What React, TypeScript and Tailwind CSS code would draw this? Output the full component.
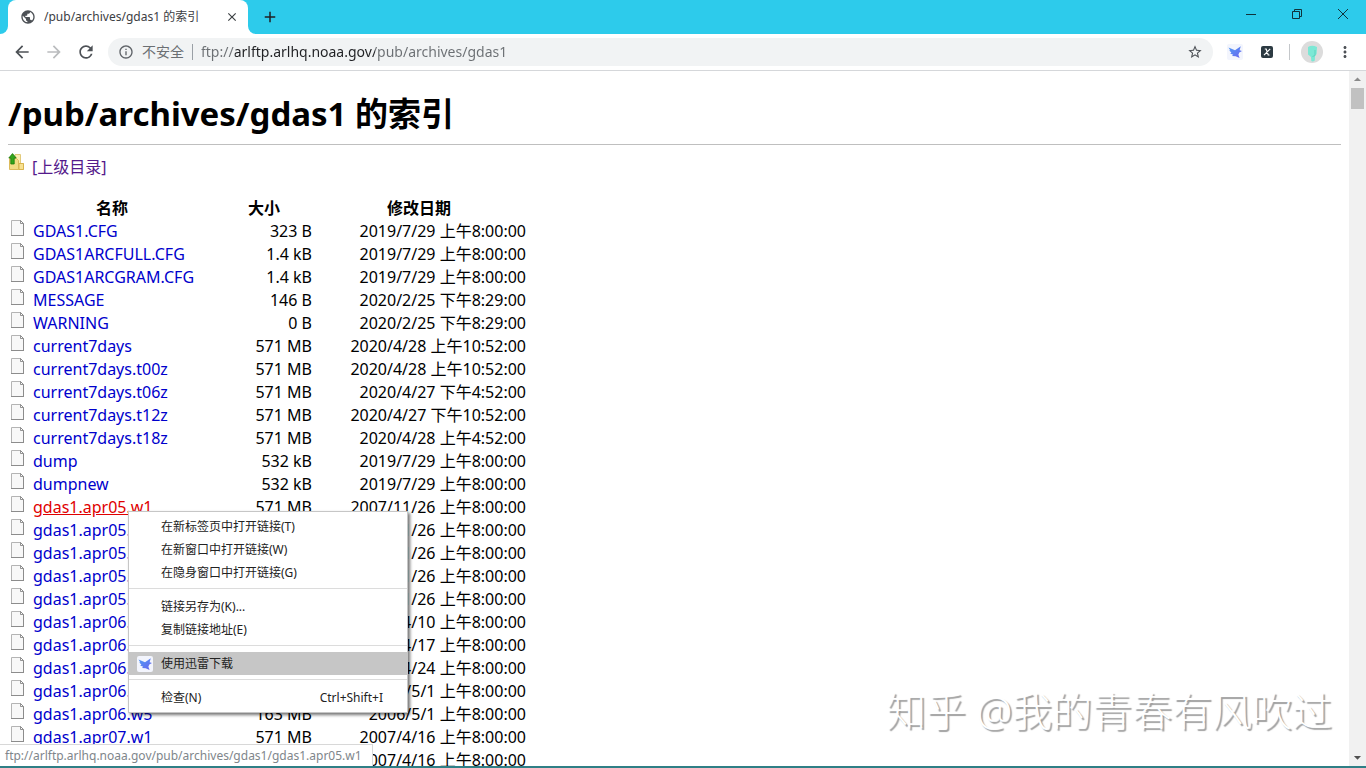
import { Fragment, useState } from "react";
import {
  MdAdd,
  MdArrowBack,
  MdArrowDropDown,
  MdArrowDropUp,
  MdArrowForward,
  MdClose,
  MdInfoOutline,
  MdMoreVert,
  MdPublic,
  MdRefresh,
  MdStarBorder,
} from "react-icons/md";

type Entry = { name: string; size: string; date: string };

const PATH = "/pub/archives/gdas1";
const HOST = "ftp://arlftp.arlhq.noaa.gov";
const HOVERED = "gdas1.apr05.w1";

const entries: Entry[] = [
  { name: "GDAS1.CFG", size: "323 B", date: "2019/7/29 上午8:00:00" },
  { name: "GDAS1ARCFULL.CFG", size: "1.4 kB", date: "2019/7/29 上午8:00:00" },
  { name: "GDAS1ARCGRAM.CFG", size: "1.4 kB", date: "2019/7/29 上午8:00:00" },
  { name: "MESSAGE", size: "146 B", date: "2020/2/25 下午8:29:00" },
  { name: "WARNING", size: "0 B", date: "2020/2/25 下午8:29:00" },
  { name: "current7days", size: "571 MB", date: "2020/4/28 上午10:52:00" },
  { name: "current7days.t00z", size: "571 MB", date: "2020/4/28 上午10:52:00" },
  { name: "current7days.t06z", size: "571 MB", date: "2020/4/27 下午4:52:00" },
  { name: "current7days.t12z", size: "571 MB", date: "2020/4/27 下午10:52:00" },
  { name: "current7days.t18z", size: "571 MB", date: "2020/4/28 上午4:52:00" },
  { name: "dump", size: "532 kB", date: "2019/7/29 上午8:00:00" },
  { name: "dumpnew", size: "532 kB", date: "2019/7/29 上午8:00:00" },
  { name: "gdas1.apr05.w1", size: "571 MB", date: "2007/11/26 上午8:00:00" },
  { name: "gdas1.apr05.w2", size: "571 MB", date: "2007/11/26 上午8:00:00" },
  { name: "gdas1.apr05.w3", size: "571 MB", date: "2007/11/26 上午8:00:00" },
  { name: "gdas1.apr05.w4", size: "571 MB", date: "2007/11/26 上午8:00:00" },
  { name: "gdas1.apr05.w5", size: "163 MB", date: "2007/11/26 上午8:00:00" },
  { name: "gdas1.apr06.w1", size: "571 MB", date: "2006/4/10 上午8:00:00" },
  { name: "gdas1.apr06.w2", size: "571 MB", date: "2006/4/17 上午8:00:00" },
  { name: "gdas1.apr06.w3", size: "571 MB", date: "2006/4/24 上午8:00:00" },
  { name: "gdas1.apr06.w4", size: "571 MB", date: "2006/5/1 上午8:00:00" },
  { name: "gdas1.apr06.w5", size: "163 MB", date: "2006/5/1 上午8:00:00" },
  { name: "gdas1.apr07.w1", size: "571 MB", date: "2007/4/16 上午8:00:00" },
  { name: "gdas1.apr07.w2", size: "571 MB", date: "2007/4/16 上午8:00:00" },
];

const menuGroups: { label: string; shortcut?: string; active?: boolean }[][] = [
  [
    { label: "在新标签页中打开链接(T)" },
    { label: "在新窗口中打开链接(W)" },
    { label: "在隐身窗口中打开链接(G)" },
  ],
  [{ label: "链接另存为(K)..." }, { label: "复制链接地址(E)" }],
  [{ label: "使用迅雷下载", active: true }],
  [{ label: "检查(N)", shortcut: "Ctrl+Shift+I" }],
];

function BirdIcon() {
  return (
    <svg viewBox="0 0 16 16" className="size-4 shrink-0" aria-hidden="true">
      <defs>
        <linearGradient id="bird" x1="0" y1="0" x2="1" y2="1">
          <stop offset="0" stopColor="#4f9bf5" />
          <stop offset="1" stopColor="#6a63ee" />
        </linearGradient>
      </defs>
      <rect width="16" height="16" rx="2" fill="#f3f5fd" />
      <path
        d="M1.500 3.500 8 6.200 13.800 2.200 12.600 6.200 15 7 12.300 8.600 11.400 10.800 12.600 14 8.600 12.200 5 12 6.200 10.800 3.200 9.400 4.400 8.600 2.200 6.600 3.200 6.200z"
        fill="url(#bird)"
      />
    </svg>
  );
}

function FileIcon() {
  return (
    <svg viewBox="0 0 16 16" className="size-4 shrink-0" aria-hidden="true">
      <path d="M1.500.5h9l3 3v12h-12z" fill="#f8f8f8" stroke="#b4b4b4" />
      <path d="M1 15.500h13M13.500 4v12" stroke="#8c8c8c" />
      <path d="M10.500.5v3h3z" fill="#fff" stroke="#777" strokeWidth=".8" />
    </svg>
  );
}

function ParentIcon() {
  return (
    <svg viewBox="0 0 17 18" className="h-[18px] w-[17px] shrink-0" aria-hidden="true">
      <path d="M7 1.500h5.500v9h3v6H7z" fill="#fbeeb0" stroke="#e2ca7c" />
      <path d="M1.500 5.500h7l2 2v9h-9z" fill="#f3dc86" stroke="#dcbb5c" />
      <path d="M11 10.500h4.500v6H11z" fill="#f7e191" stroke="#d9b44e" />
      <path d="M4.500.6 8.200 5H6.200v6H2.800V5H.8z" fill="#35a51b" stroke="#1c7a0c" strokeWidth=".8" />
    </svg>
  );
}

function TabStrip() {
  return (
    <header className="flex h-[34px] shrink-0 items-stretch bg-[#2dcbeb]">
      <div className="flex w-2 items-end bg-white">
        <span className="h-full w-full rounded-br-lg bg-[#2dcbeb]" />
      </div>
      <div className="flex w-60 items-center rounded-t-lg bg-white pr-2 pl-3">
        <MdPublic className="size-4 shrink-0 text-[#4d5156]" />
        <span className="ml-2 w-40 overflow-hidden text-xs whitespace-nowrap text-[#3c4043]">
          {PATH} 的索引
        </span>
        <button type="button" aria-label="关闭标签页" className="ml-auto flex size-4 items-center justify-center text-[#3c4043]">
          <MdClose className="size-[14px]" />
        </button>
      </div>
      <div className="flex w-2 items-end bg-white">
        <span className="h-full w-full rounded-bl-lg bg-[#2dcbeb]" />
      </div>
      <button type="button" aria-label="新标签页" className="flex w-7 items-center justify-center text-[#202124]">
        <MdAdd className="size-[18px]" />
      </button>
      <div className="ml-auto flex h-7">
        <button type="button" aria-label="最小化" className="flex w-[46px] items-center justify-center">
          <svg viewBox="0 0 10 10" className="size-[10px]"><path d="M0 5.500h10" stroke="#10333b" /></svg>
        </button>
        <button type="button" aria-label="还原" className="flex w-[46px] items-center justify-center">
          <svg viewBox="0 0 10 10" className="size-[10px]" fill="none" stroke="#10333b">
            <path d="M.5 2.500h7v7h-7zM2.500 2.500v-2h7v7h-2" />
          </svg>
        </button>
        <button type="button" aria-label="关闭" className="flex w-[46px] items-center justify-center">
          <svg viewBox="0 0 10 10" className="size-[10px]"><path d="M0 0l10 10M10 0L0 10" stroke="#10333b" /></svg>
        </button>
      </div>
    </header>
  );
}

function Toolbar() {
  const [url, setUrl] = useState(HOST + PATH);

  return (
    <nav className="flex h-[37px] shrink-0 items-center border-b border-[#d5d7da] bg-white pl-3">
      <button type="button" aria-label="后退" className="text-[#4d5156]">
        <MdArrowBack className="size-5" />
      </button>
      <button type="button" aria-label="前进" className="ml-3 text-[#babcbe]">
        <MdArrowForward className="size-5" />
      </button>
      <button type="button" aria-label="重新加载" className="ml-3 text-[#4d5156]">
        <MdRefresh className="size-5" />
      </button>
      <div className="ml-3 flex h-7 grow items-center rounded-full bg-[#f1f3f4] pr-[10px] pl-[10px]">
        <MdInfoOutline className="size-4 shrink-0 text-[#5f6368]" />
        <span className="ml-2 shrink-0 text-sm text-[#6b6f73]">不安全</span>
        <span className="mx-2 h-4 w-px shrink-0 bg-[#9aa0a6]" />
        {/* scheme and path are dimmed, the host stays dark */}
        <input
          type="text"
          aria-label="地址栏"
          value={url}
          onChange={(e) => setUrl(e.target.value)}
          className="min-w-0 grow bg-[linear-gradient(to_right,#6b6f73_34px,#202124_34px,#202124_174px,#6b6f73_174px)] bg-clip-text text-sm text-transparent caret-black outline-none"
        />
        <button type="button" aria-label="添加书签" className="text-[#4d5156]">
          <MdStarBorder className="size-4" />
        </button>
      </div>
      <button type="button" aria-label="迅雷下载支持" className="ml-[14px]">
        <BirdIcon />
      </button>
      <button type="button" aria-label="扩展程序" className="ml-4">
        <svg viewBox="0 0 16 16" className="size-4">
          <rect x="2" y="2" width="12" height="12" rx="2" fill="#2c3a42" />
          <path d="M5.800 5h1.400l2 6h1.300M11.200 4.800 5 11.200" stroke="#fff" strokeWidth="1.200" fill="none" />
        </svg>
      </button>
      <span className="ml-[14px] h-4 w-px bg-[#c4c7ca]" />
      <button type="button" aria-label="用户" className="ml-[11px]">
        <svg viewBox="0 0 22 22" className="size-[22px]">
          <circle cx="11" cy="11" r="11" fill="#dcdcdc" />
          <path d="M7 6Q11 3.500 16 6L15.600 13l-1.600 2-.2 4.500q-2 1.500-3.500.5L10 16l-3-2.500z" fill="#7ce8d5" />
          <path d="M14 9v5.500l-2.500 1" stroke="#5fd3c0" fill="none" />
        </svg>
      </button>
      <button type="button" aria-label="菜单" className="mr-3 ml-[13px] text-[#4d5156]">
        <MdMoreVert className="size-[18px]" />
      </button>
    </nav>
  );
}

function Listing() {
  return (
    <main className="min-w-0 grow overflow-hidden px-2 text-base text-black">
      <h1 className="mt-[21px] border-b border-[#bfbfbf] pb-[9px] text-[33px] leading-[43px] font-bold">
        {PATH} 的索引
      </h1>
      <a href="#parent" className="mt-2 flex w-fit gap-[7px] leading-[28px] text-[#551a8b]">
        <ParentIcon />
        [上级目录]
      </a>
      <table className="mt-4 table-fixed border-collapse leading-[23px]">
        <colgroup>
          <col className="w-[208px]" />
          <col className="w-24" />
          <col className="w-[214px]" />
        </colgroup>
        <thead>
          <tr>
            <th className="p-0">名称</th>
            <th className="p-0">大小</th>
            <th className="p-0">修改日期</th>
          </tr>
        </thead>
        <tbody className="whitespace-nowrap">
          {entries.map((entry) => (
            <tr key={entry.name}>
              <td className="p-0">
                <a
                  href={`#${entry.name}`}
                  className={
                    entry.name === HOVERED
                      ? "flex h-[23px] gap-[7px] pl-[2px] text-[#e00000] underline"
                      : "flex h-[23px] gap-[7px] pl-[2px] text-[#0000cc]"
                  }
                >
                  <FileIcon />
                  {entry.name}
                </a>
              </td>
              <td className="p-0 text-right">{entry.size}</td>
              <td className="p-0 text-right">{entry.date}</td>
            </tr>
          ))}
        </tbody>
      </table>
    </main>
  );
}

function ContextMenu() {
  return (
    <div
      role="menu"
      className="absolute top-[440px] left-32 w-[280px] border border-[#c6c6c6] bg-white py-[3px] text-xs text-[#222] shadow-[2px_2px_3px_rgba(0,0,0,0.55)]"
    >
      {menuGroups.map((group, i) => (
        <Fragment key={group[0].label}>
          {i > 0 && <div role="separator" className="mt-1 mb-[6px] h-px bg-[#dcdcdc]" />}
          {group.map((item) => (
            <button
              key={item.label}
              type="button"
              role="menuitem"
              className={
                item.active
                  ? "flex h-[23px] w-full items-center bg-[#c6c6c6] pr-6 pl-2"
                  : "flex h-[23px] w-full items-center pr-6 pl-2"
              }
            >
              <span className="mr-2 size-4">{item.active && <BirdIcon />}</span>
              {item.label}
              {item.shortcut && <span className="ml-auto">{item.shortcut}</span>}
            </button>
          ))}
        </Fragment>
      ))}
    </div>
  );
}

function Scrollbar() {
  return (
    <div className="flex w-[17px] shrink-0 flex-col items-center bg-[#f1f1f1]">
      <button type="button" aria-label="向上滚动" className="flex h-[17px] items-center justify-center text-[#8a8a8a]">
        <MdArrowDropUp className="size-[17px]" />
      </button>
      <div className="h-[21px] w-[13px] bg-[#c1c1c1]" />
      <button type="button" aria-label="向下滚动" className="mt-auto flex h-[17px] items-center justify-center text-[#505050]">
        <MdArrowDropDown className="size-[17px]" />
      </button>
    </div>
  );
}

export default function App() {
  return (
    <div className="flex h-screen flex-col overflow-hidden bg-white font-['Noto_Sans','Noto_Sans_CJK_SC',sans-serif]">
      <TabStrip />
      <Toolbar />
      <div className="relative flex min-h-0 grow overflow-hidden">
        <Listing />
        <Scrollbar />
        <ContextMenu />
        <div className="absolute bottom-0 left-0 border-t border-r border-[#d8d8d8] bg-white pr-[10px] pl-[5px] text-xs leading-[21px] text-[#80868b]">
          {HOST + PATH}/{HOVERED}
        </div>
        <p className="absolute right-[34px] bottom-[29px] text-[40px] leading-[52px] font-light text-white [text-shadow:2px_2px_1px_#a0a0a0]">
          知乎 @我的青春有风吹过
        </p>
      </div>
      <footer className="h-[2px] shrink-0 bg-[#2f7f86]" />
    </div>
  );
}
